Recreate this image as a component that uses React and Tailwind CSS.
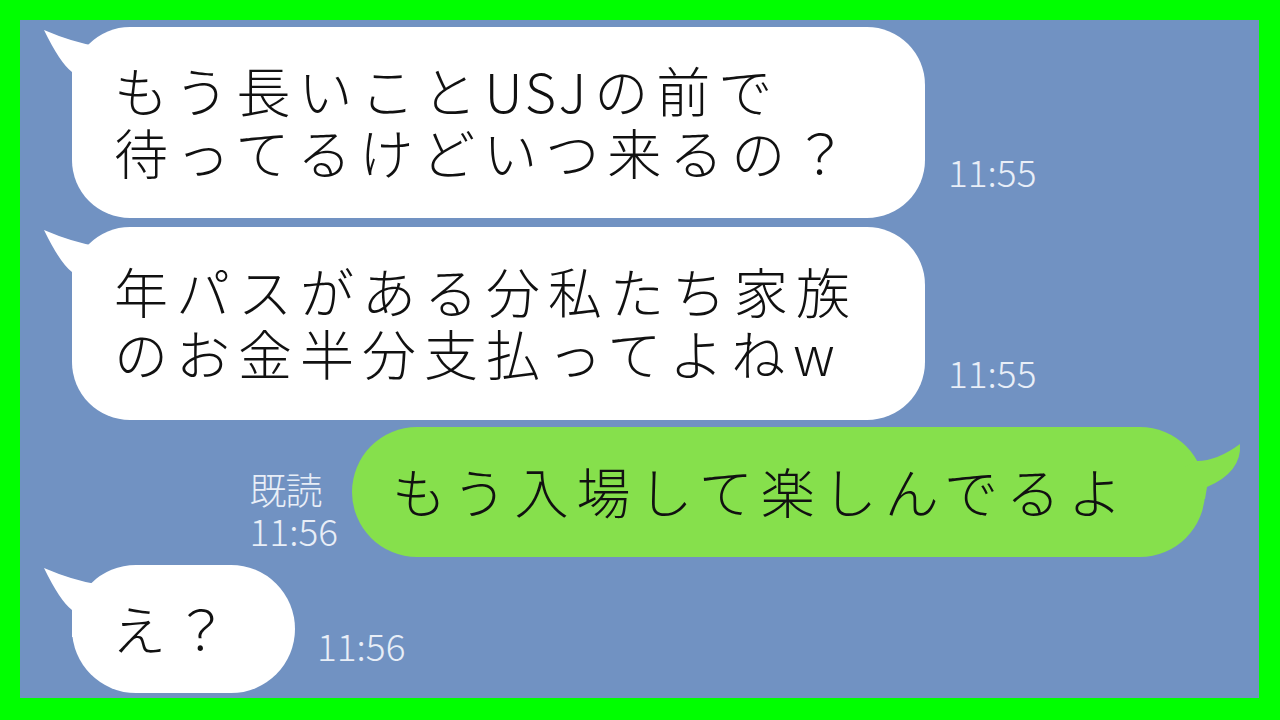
import React from "react";

const JP = { fontFamily: '"Noto Sans CJK JP", "Noto Sans", sans-serif' };

function LeftTail() {
  return (
    <svg
      className="absolute left-[-28px] top-0"
      width="64"
      height="72"
      viewBox="0 0 64 72"
    >
      <path
        d="M0,3 Q28,15 52,19 L62,19 L62,72 L28,72 L28,45 Q16,36 0,3 Z"
        fill="#ffffff"
      />
    </svg>
  );
}

function RightTail() {
  return (
    <svg
      className="absolute right-[-40px] top-0"
      width="60"
      height="80"
      viewBox="0 0 60 80"
    >
      <path
        d="M55,17 Q32,34 12,34 L0,40 L0,72 L20,72 L22,60 Q57,45 55,17 Z"
        fill="#86e04c"
      />
    </svg>
  );
}

function Time({ children, className = "" }) {
  return (
    <div
      className={"text-[37px] leading-[38px] font-light text-[#e8eef7] " + className}
      style={JP}
    >
      {children}
    </div>
  );
}

function LeftBubble({ lines, w, h, pl, className = "" }) {
  return (
    <div
      className={"relative bg-white rounded-[58px] flex flex-col justify-center " + className}
      style={{ width: w, height: h, paddingLeft: pl }}
    >
      <LeftTail />
      <div
        className="relative -mt-[3px] text-[54px] leading-[62px] tracking-[8px] font-light text-[#111] whitespace-nowrap"
        style={JP}
      >
        {lines.map((l, i) => (
          <div key={i}>{l}</div>
        ))}
      </div>
    </div>
  );
}

export default function App() {
  return (
    <div className="w-[1280px] h-[720px] bg-[#00ff00] pt-[20px] pl-[20px] pr-[21px] pb-[22px]">
      <div className="h-full bg-[#7192c2] flex flex-col">
        {/* row 1 */}
        <div className="flex items-end pl-[52px] mt-[7px]">
          <LeftBubble
            lines={[
              <>
                もう長いこと<span className="tracking-[3px]">USJ</span>
                <span className="ml-[5px]">の前で</span>
              </>,
              "待ってるけどいつ来るの？",
            ]}
            w={853}
            h={191}
            pl={42}
          />
          <Time className="ml-[23px] mb-[28px]">11:55</Time>
        </div>

        {/* row 2 */}
        <div className="flex items-end pl-[52px] mt-[9px]">
          <LeftBubble
            lines={["年パスがある分私たち家族", "のお金半分支払ってよねw"]}
            w={853}
            h={193}
            pl={42}
          />
          <Time className="ml-[23px] mb-[29px]">11:55</Time>
        </div>

        {/* row 3 */}
        <div className="flex items-end justify-end pr-[54px] mt-[7px]">
          <div
            className="flex flex-col text-[37px] leading-[41px] font-light text-[#e8eef7] mr-[14px] mb-[6px]"
            style={JP}
          >
            <div className="text-[37px] tracking-[-1px]">既読</div>
            <div>11:56</div>
          </div>
          <div className="relative w-[853px] h-[130px] bg-[#86e04c] rounded-[65px] flex items-center pl-[40px]">
            <RightTail />
            <div
              className="relative -mt-[2px] text-[54px] leading-[62px] tracking-[8px] font-light text-[#111] whitespace-nowrap"
              style={JP}
            >
              もう入場して楽しんでるよ
            </div>
          </div>
        </div>

        {/* row 4 */}
        <div className="flex items-end pl-[52px] mt-[8px]">
          <LeftBubble lines={["え？"]} w={223} h={128} pl={40} className="rounded-[64px]" />
          <Time className="ml-[22px] mb-[29px]">11:56</Time>
        </div>
      </div>
    </div>
  );
}
